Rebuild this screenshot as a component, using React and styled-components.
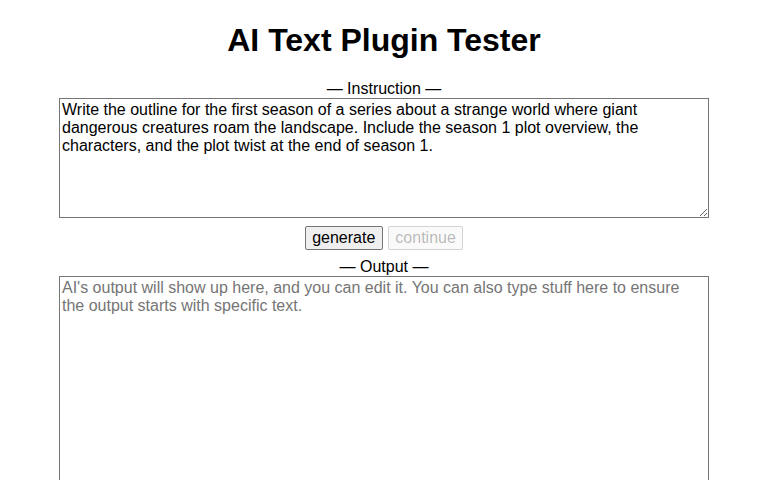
import React from "react";
import styled, { createGlobalStyle } from "styled-components";

const Global = createGlobalStyle`
  html, body { margin: 0; padding: 0; background: #fff; }
  body { font-family: "Liberation Sans", Arial, sans-serif; font-size: 16px; color: #000; }
`;

const Page = styled.div`
  padding: 0 8px;
  display: flex;
  flex-direction: column;
  align-items: center;
`;

const Title = styled.h1`
  margin: 22px 0 21px;
  font-size: 32px;
  font-weight: bold;
  line-height: 37px;
  text-align: center;
`;

const Label = styled.div`
  line-height: 18px;
  text-align: center;
  margin-top: ${(p) => p.$top || 0}px;
`;

const Area = styled.textarea`
  display: block;
  box-sizing: border-box;
  width: 650px;
  height: ${(p) => p.$h}px;
  padding: 2px;
  border: 1px solid #767676;
  font-family: "Liberation Sans", Arial, sans-serif;
  font-size: 16px;
  line-height: 18px;
  color: #000;
  resize: ${(p) => (p.$resize ? "both" : "none")};
  &::placeholder { color: #757575; }
`;

const Buttons = styled.div`
  display: flex;
  gap: 5px;
  justify-content: center;
  margin-top: 8px;
`;

const Btn = styled.button`
  box-sizing: border-box;
  height: 24px;
  padding: 1px 6.5px;
  font-family: "Liberation Sans", Arial, sans-serif;
  font-size: 16px;
  line-height: 18px;
  color: #000;
  background: #efefef;
  border: 1px solid #767676;
  border-radius: 2px;
  &:disabled {
    color: rgba(16, 16, 16, 0.3);
    background: rgba(239, 239, 239, 0.3);
    border-color: rgba(118, 118, 118, 0.3);
  }
`;

export default function App() {
  return (
    <>
      <Global />
      <Page>
        <Title>AI Text Plugin Tester</Title>
        <Label>— Instruction —</Label>
        <Area
          $h={120}
          $resize
          defaultValue="Write the outline for the first season of a series about a strange world where giant dangerous creatures roam the landscape. Include the season 1 plot overview, the characters, and the plot twist at the end of season 1."
        />
        <Buttons>
          <Btn>generate</Btn>
          <Btn disabled>continue</Btn>
        </Buttons>
        <Label $top={8}>— Output —</Label>
        <Area
          $h={260}
          placeholder="AI's output will show up here, and you can edit it. You can also type stuff here to ensure the output starts with specific text."
        />
      </Page>
    </>
  );
}
